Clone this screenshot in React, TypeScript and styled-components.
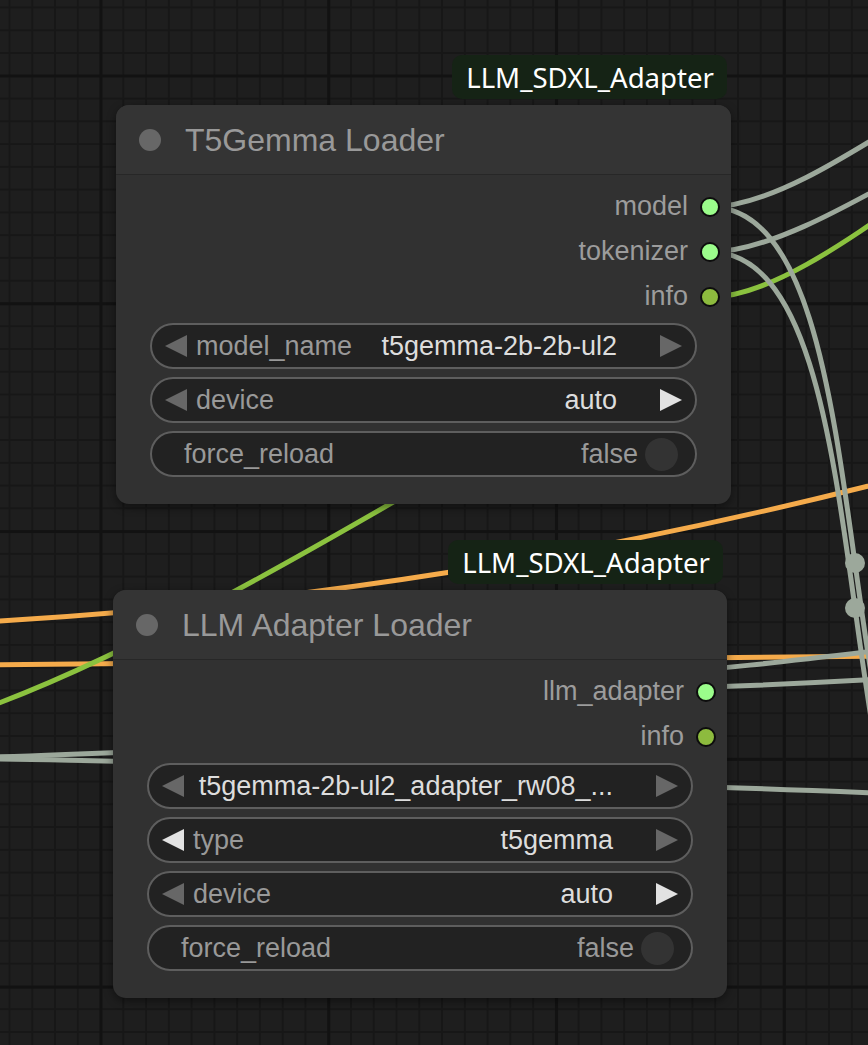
import styled, { createGlobalStyle } from 'styled-components';

const GlobalStyle = createGlobalStyle`
  html, body {
    margin: 0;
    padding: 0;
    background: #1d1d1d;
  }
  #root {
    width: 868px;
    height: 1045px;
  }
`;

// colours
const GRAY = '#9ca89b';
const ORANGE = '#f5ab4b';
const LIME = '#8bc23f';

const Canvas = styled.div`
  position: relative;
  width: 868px;
  height: 1045px;
  overflow: hidden;
  background-color: #1e1e1e;
  background-image:
    linear-gradient(to right, #121212 3px, transparent 3px),
    linear-gradient(to bottom, #121212 3px, transparent 3px),
    linear-gradient(to right, #171717 2px, transparent 2px),
    linear-gradient(to bottom, #171717 2px, transparent 2px);
  background-size: 227.8px 100%, 100% 227.8px, 22.78px 100%, 100% 22.78px;
  background-position: 99.5px 0, 0 74.5px, 8.5px 0, 0 6.5px;
  font-family: 'Liberation Sans', Arial, sans-serif;
`;

const WireLayer = styled.svg`
  position: absolute;
  left: 0;
  top: 0;
  width: 868px;
  height: 1045px;
`;

const NodeBox = styled.div<{ $x: number; $y: number; $w: number }>`
  position: absolute;
  left: ${(p) => p.$x}px;
  top: ${(p) => p.$y}px;
  width: ${(p) => p.$w}px;
  display: flex;
  flex-direction: column;
  background: #313131;
  border-radius: 13px;
  box-shadow: 0 3px 10px rgba(0, 0, 0, 0.45);
`;

const Badge = styled.div`
  position: absolute;
  right: 4px;
  bottom: calc(100% + 6px);
  height: 44px;
  padding: 0 13px 0 14px;
  border-radius: 10px;
  background: #152315;
  color: #ffffff;
  font-family: 'Noto Sans', 'Open Sans', sans-serif;
  font-size: 27.6px;
  line-height: 44px;
  white-space: nowrap;
`;

const TitleBar = styled.div`
  height: 69px;
  display: flex;
  align-items: center;
  gap: 24px;
  padding-left: 23px;
  background: #343434;
  border-radius: 13px 13px 0 0;
  border-bottom: 1px solid #272727;
`;

const TitleDot = styled.span`
  width: 22px;
  height: 22px;
  border-radius: 50%;
  background: #676767;
`;

const TitleText = styled.span`
  font-size: 32px;
  line-height: 1;
  color: #999999;
`;

const Body = styled.div`
  display: flex;
  flex-direction: column;
  padding: 9px 34px 27px;
`;

const Outputs = styled.div`
  display: flex;
  flex-direction: column;
  margin: 0 -23px 4px 0;
`;

const OutputRow = styled.div`
  height: 45px;
  display: flex;
  align-items: center;
  justify-content: flex-end;
  gap: 12px;
`;

const SlotLabel = styled.span`
  font-size: 27px;
  color: #9c9c9c;
`;

const SlotDot = styled.span<{ $color: string }>`
  width: 20px;
  height: 20px;
  box-sizing: border-box;
  border-radius: 50%;
  border: 2px solid #0d0d0d;
  background: ${(p) => p.$color};
`;

const WidgetList = styled.div`
  display: flex;
  flex-direction: column;
  gap: 8px;
`;

const Widget = styled.div`
  height: 46px;
  box-sizing: border-box;
  display: flex;
  align-items: center;
  padding: 0 13px;
  border: 2px solid #5e5e5e;
  border-radius: 23px;
  background: #222222;
  font-size: 27px;
  white-space: nowrap;
`;

const ToggleWidget = styled(Widget)`
  padding: 0 17px 0 32px;
`;

const Arrow = styled.span<{ $dir: 'left' | 'right'; $bright?: boolean }>`
  flex: none;
  width: 22px;
  height: 22px;
  background: ${(p) => (p.$bright ? '#e2e2e2' : '#676767')};
  clip-path: ${(p) =>
    p.$dir === 'left'
      ? 'polygon(100% 0, 0 50%, 100% 100%)'
      : 'polygon(0 0, 100% 50%, 0 100%)'};
`;

const WidgetLabel = styled.span`
  flex: 1;
  margin-left: 9px;
  color: #999999;
`;

const WidgetValue = styled.span`
  margin-right: 43px;
  color: #dddddd;
`;

const ToggleLabel = styled.span`
  flex: 1;
  color: #999999;
`;

const ToggleValue = styled.span`
  margin-right: 7px;
  color: #999999;
`;

const Knob = styled.span`
  width: 33px;
  height: 33px;
  border-radius: 50%;
  background: #333333;
`;

type Combo = {
  kind: 'combo';
  label: string;
  value: string;
  left?: boolean;
  right?: boolean;
};
type Toggle = { kind: 'toggle'; label: string; value: string };
type WidgetDef = Combo | Toggle;

type NodeDef = {
  x: number;
  y: number;
  w: number;
  title: string;
  outputs: { name: string; color: string }[];
  widgets: WidgetDef[];
};

const LIGHT = '#9bfd8b';
const OLIVE = '#8dbb3e';

const nodes: NodeDef[] = [
  {
    x: 116,
    y: 105,
    w: 615,
    title: 'T5Gemma Loader',
    outputs: [
      { name: 'model', color: LIGHT },
      { name: 'tokenizer', color: LIGHT },
      { name: 'info', color: OLIVE },
    ],
    widgets: [
      { kind: 'combo', label: 'model_name', value: 't5gemma-2b-2b-ul2' },
      { kind: 'combo', label: 'device', value: 'auto', right: true },
      { kind: 'toggle', label: 'force_reload', value: 'false' },
    ],
  },
  {
    x: 113,
    y: 590,
    w: 614,
    title: 'LLM Adapter Loader',
    outputs: [
      { name: 'llm_adapter', color: LIGHT },
      { name: 'info', color: OLIVE },
    ],
    widgets: [
      { kind: 'combo', label: '', value: 't5gemma-2b-ul2_adapter_rw08_...' },
      { kind: 'combo', label: 'type', value: 't5gemma', left: true },
      { kind: 'combo', label: 'device', value: 'auto', right: true },
      { kind: 'toggle', label: 'force_reload', value: 'false' },
    ],
  },
];

// litegraph style spline between two slots
const link = (x1: number, y1: number, x2: number, y2: number) => {
  const d = Math.hypot(x2 - x1, y2 - y1) * 0.25;
  return `M${x1},${y1} C${x1 + d},${y1} ${x2 - d},${y2} ${x2},${y2}`;
};
const mid = (x1: number, y1: number, x2: number, y2: number) => ({
  x: (x1 + x2) / 2,
  y: (y1 + y2) / 2,
});

const wires: { d: string; color: string }[] = [
  { d: 'M-20,622 C300,605 600,555 900,478', color: ORANGE },
  { d: 'M-20,665 C300,664 600,660 900,656', color: ORANGE },
  { d: 'M-20,710 C120,660 300,560 600,380', color: LIME },
  { d: 'M-20,757 C50,757 90,751 300,748', color: GRAY },
  { d: 'M-20,759 C50,759 90,762 300,764', color: GRAY },
  { d: 'M600,677 C700,672 800,660 900,648', color: GRAY },
  { d: 'M600,690 C700,688 800,684 900,678', color: GRAY },
  { d: 'M600,784 C700,786 800,790 900,794', color: GRAY },
  { d: link(710, 207, 1120, 20), color: GRAY },
  { d: link(710, 252, 1120, 85), color: GRAY },
  { d: link(710, 297, 1120, 90), color: LIME },
  { d: link(710, 207, 1000, 919), color: GRAY },
  { d: link(710, 252, 1000, 964), color: GRAY },
];

const midpoints = [mid(710, 207, 1000, 919), mid(710, 252, 1000, 964)];

const WidgetRow = ({ w }: { w: WidgetDef }) => {
  if (w.kind === 'toggle') {
    return (
      <ToggleWidget>
        <ToggleLabel>{w.label}</ToggleLabel>
        <ToggleValue>{w.value}</ToggleValue>
        <Knob />
      </ToggleWidget>
    );
  }
  return (
    <Widget>
      <Arrow $dir="left" $bright={w.left} />
      <WidgetLabel>{w.label}</WidgetLabel>
      <WidgetValue>{w.value}</WidgetValue>
      <Arrow $dir="right" $bright={w.right} />
    </Widget>
  );
};

const GraphNode = ({ node }: { node: NodeDef }) => (
  <NodeBox $x={node.x} $y={node.y} $w={node.w}>
    <Badge>LLM_SDXL_Adapter</Badge>
    <TitleBar>
      <TitleDot />
      <TitleText>{node.title}</TitleText>
    </TitleBar>
    <Body>
      <Outputs>
        {node.outputs.map((o) => (
          <OutputRow key={o.name}>
            <SlotLabel>{o.name}</SlotLabel>
            <SlotDot $color={o.color} />
          </OutputRow>
        ))}
      </Outputs>
      <WidgetList>
        {node.widgets.map((w, i) => (
          <WidgetRow key={i} w={w} />
        ))}
      </WidgetList>
    </Body>
  </NodeBox>
);

export default function App() {
  return (
    <>
      <GlobalStyle />
      <Canvas>
        <WireLayer viewBox="0 0 868 1045">
          {wires.map((w, i) => (
            <path key={i} d={w.d} stroke={w.color} strokeWidth={5} fill="none" />
          ))}
          {midpoints.map((m, i) => (
            <circle key={i} cx={m.x} cy={m.y} r={10} fill={GRAY} />
          ))}
        </WireLayer>
        {nodes.map((n) => (
          <GraphNode key={n.title} node={n} />
        ))}
      </Canvas>
    </>
  );
}
